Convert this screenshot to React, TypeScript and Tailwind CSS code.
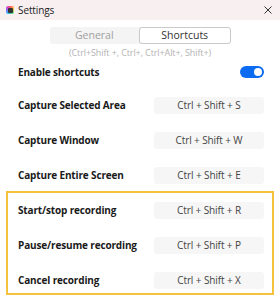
import React from 'react';

const KeyBox: React.FC<{ keys: string }> = ({ keys }) => (
  <div className="w-[110px] h-[17px] rounded-[3px] bg-[#f6f6f6] flex items-center justify-center text-[10px] tracking-[-0.1px] text-[#444]">
    {keys}
  </div>
);

const Row: React.FC<{ label: string; keys: string; className?: string }> = ({ label, keys, className }) => (
  <div className={`flex items-start justify-between pt-[9px] ${className ?? 'h-[35px]'}`}>
    <span className="h-[17px] flex items-center text-[10px] font-bold tracking-[-0.15px] text-[#1a1a1a]">{label}</span>
    <KeyBox keys={keys} />
  </div>
);

export default function App() {
  return (
    <div className="w-[280px] h-[300px] bg-white overflow-hidden" style={{ fontFamily: '"Open Sans", "Noto Sans", sans-serif' }}>
      {/* title bar */}
      <div className="h-[20px] bg-[#f7eff0] flex items-center justify-between pl-[6px] pr-[8px]">
        <div className="flex items-center gap-[4px]">
          <div className="w-[8px] h-[8px] rounded-[2px] p-[1.5px] bg-[conic-gradient(#ff4d6d,#ffd23f,#4ade80,#38bdf8,#a855f7,#ff4d6d)]">
            <div className="w-full h-full rounded-[1px] bg-[#333]" />
          </div>
          <span className="text-[10px] tracking-[-0.1px] text-[#222]">Settings</span>
        </div>
        <svg width="8" height="8" viewBox="0 0 8 8" className="text-[#333]">
          <path d="M0.5 0.5 L7.5 7.5 M7.5 0.5 L0.5 7.5" stroke="currentColor" strokeWidth="1" />
        </svg>
      </div>

      {/* tabs */}
      <div className="mt-[7px] flex justify-center">
        <div className="flex h-[17px] w-[181px] rounded-[3px] bg-[#f4f4f4] text-[10.5px]">
          <div className="flex-1 flex items-center justify-center text-[#a0a0a0]">General</div>
          <div className="flex-1 flex items-center justify-center bg-white border border-[#c9c9c9] rounded-[3px] text-[#333]">
            Shortcuts
          </div>
        </div>
      </div>
      <div className="h-[17px] flex items-center justify-center text-[9px] tracking-[-0.1px] text-[#b3b3b3]">
        (Ctrl+Shift +, Ctrl+, Ctrl+Alt+, Shift+)
      </div>

      <div className="px-[6px]">
        <div className="pl-[12px] pr-[10px]">
          <div className="h-[22px] flex items-center justify-between">
            <span className="text-[10px] font-bold tracking-[-0.15px] text-[#1a1a1a]">Enable shortcuts</span>
            <div className="w-[24px] h-[12px] rounded-full bg-[#0b6cf2] flex items-center justify-end pr-[2px]">
              <div className="w-[8px] h-[8px] rounded-full bg-white" />
            </div>
          </div>
          <div className="mt-[5px]">
            <Row label="Capture Selected Area" keys="Ctrl + Shift + S" />
            <Row label="Capture Window" keys="Ctrl + Shift + W" />
            <Row label="Capture Entire Screen" keys="Ctrl + Shift + E" className="h-[33px]" />
          </div>
        </div>

        <div className="border-2 border-[#f5c33b] pl-[10px] pr-[8px]">
          <Row label="Start/stop recording" keys="Ctrl + Shift + R" />
          <Row label="Pause/resume recording" keys="Ctrl + Shift + P" />
          <Row label="Cancel recording" keys="Ctrl + Shift + X" className="h-[30px]" />
        </div>
      </div>
    </div>
  );
}
